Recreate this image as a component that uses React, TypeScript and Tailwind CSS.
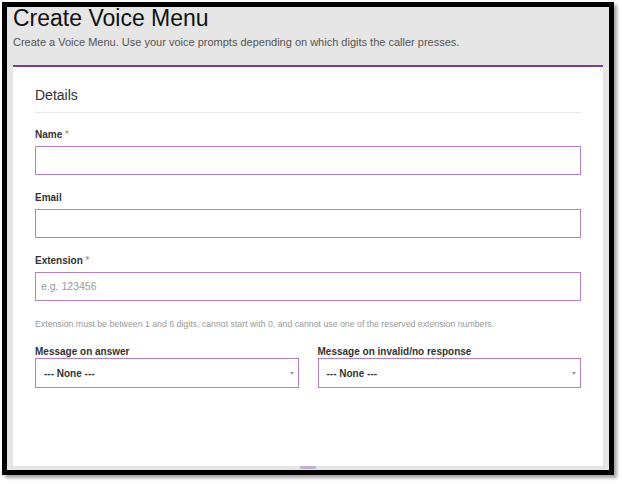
import React from "react";

const Label = ({ text, req, className = "" }: { text: string; req?: boolean; className?: string }) => (
  <div className={`h-[12px] text-[10px] leading-[12px] font-bold text-[#333] ${className}`}>
    {text}
    {req && <span className="font-normal text-[#c76a6a]"> *</span>}
  </div>
);

const Input = ({ placeholder, className = "" }: { placeholder?: string; className?: string }) => (
  <div className={`h-[29px] border border-[#b57fc4] bg-white flex items-center pl-[5px] ${className}`}>
    {placeholder && <span className="text-[10.5px] text-[#9a9a9a]">{placeholder}</span>}
  </div>
);

const Select = () => (
  <div className="h-[30px] border border-[#b57fc4] bg-white flex items-center justify-between pl-[8px] pr-[4px]">
    <span className="text-[10px] font-bold text-[#333]">--- None ---</span>
    <svg width="4" height="3" viewBox="0 0 4 3">
      <path d="M0 0 L4 0 L2 3 Z" fill="#999" />
    </svg>
  </div>
);

export default function App() {
  return (
    <div className="w-[622px] h-[484px] bg-white relative" style={{ fontFamily: '"Liberation Sans", Arial, sans-serif' }}>
      <div className="absolute left-[2px] top-[2px] w-[612px] h-[473px] border-[5px] border-black shadow-[3px_3px_3px_rgba(0,0,0,0.35)]">
        <div className="w-full h-full bg-[#e6e6e6] flex flex-col pl-[6px] pr-[6px] pb-[4px] relative">
          <div className="h-[58px] shrink-0">
            <div className="text-[23px] leading-[22px] text-[#111]">Create Voice Menu</div>
            <div className="mt-[6px] text-[11px] leading-[14px] text-[#555]">
              Create a Voice Menu. Use your voice prompts depending on which digits the caller presses.
            </div>
          </div>
          <div className="flex-1 bg-white border-t-2 border-[#7d3f8d] px-[22px] pt-[20px]">
            <div className="text-[14px] leading-[16px] text-[#333]">Details</div>
            <div className="mt-[9px] border-b border-[#e6e6e6]" />
            <Label text="Name" req className="mt-[16px]" />
            <Input className="mt-[5px]" />
            <Label text="Email" className="mt-[17px]" />
            <Input className="mt-[5px]" />
            <Label text="Extension" req className="mt-[17px]" />
            <Input className="mt-[5px]" placeholder="e.g. 123456" />
            <div className="mt-[18px] text-[8.75px] leading-[11px] text-[#999]">
              Extension must be between 1 and 6 digits, cannot start with 0, and cannot use one of the reserved extension numbers.
            </div>
            <div className="mt-[16px] grid grid-cols-2 gap-x-[19px]">
              <div>
                <Label text="Message on answer" />
                <Select />
              </div>
              <div>
                <Label text="Message on invalid/no response" />
                <Select />
              </div>
            </div>
          </div>
          <div className="absolute left-[293px] bottom-[1px] w-[16px] h-[3px] bg-[#c6b0cc] rounded-[1px]" />
        </div>
      </div>
    </div>
  );
}
